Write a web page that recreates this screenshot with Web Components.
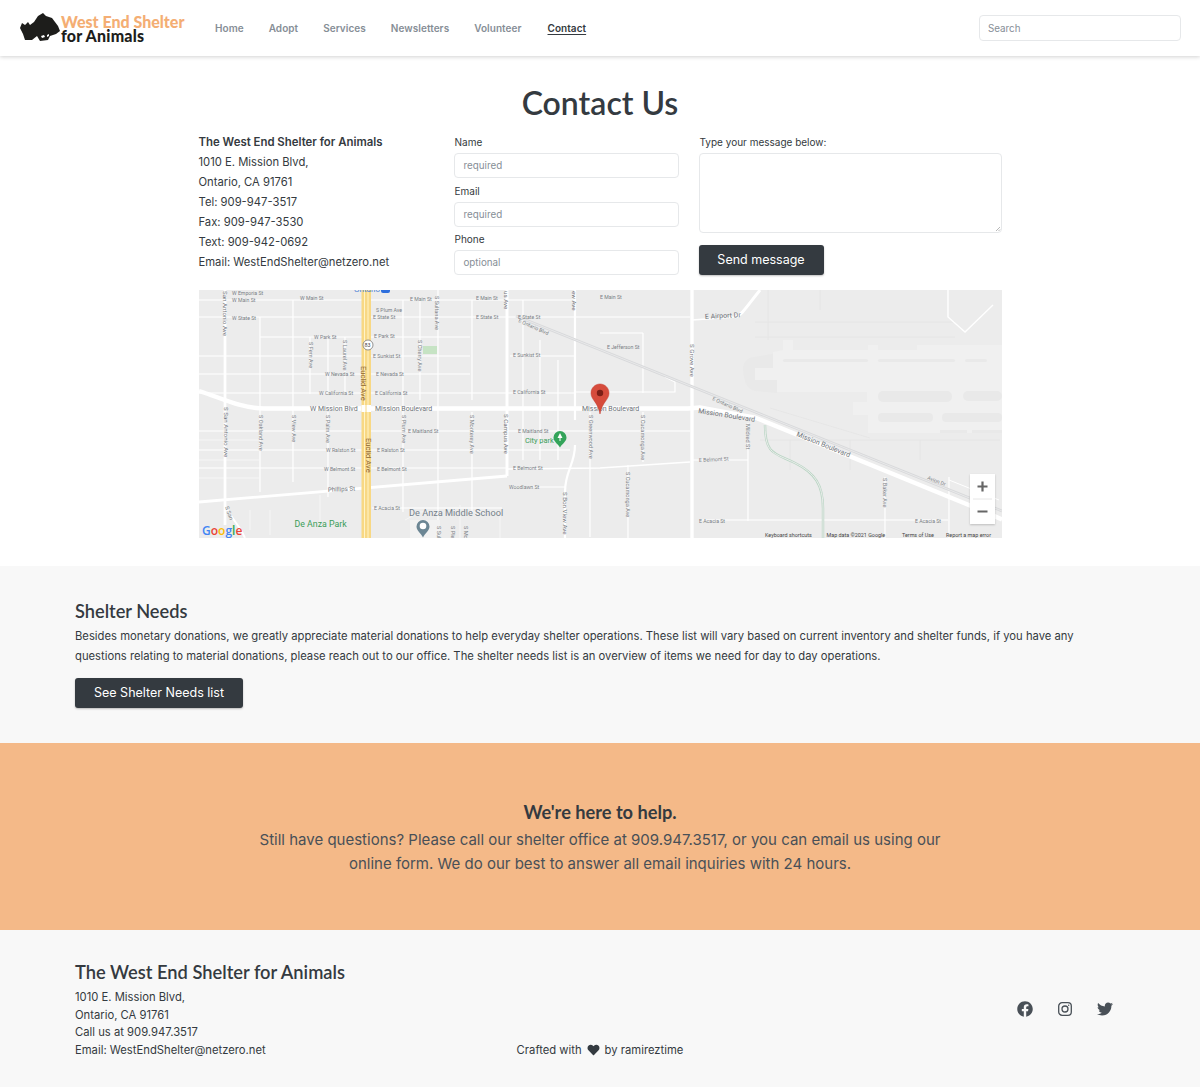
<!DOCTYPE html>
<html><head><meta charset="utf-8">
<style>
html,body{margin:0;padding:0;background:#fff}
body{font-family:Inter,"Liberation Sans",sans-serif;font-size:11.250px;line-height:20px;color:#343a40}
</style></head>
<body>
<site-nav></site-nav>
<contact-main></contact-main>
<needs-section></needs-section>
<help-band></help-band>
<site-footer></site-footer>
<script>
function el(name,html){customElements.define(name,class extends HTMLElement{constructor(){super();this.attachShadow({mode:'open'}).innerHTML=html;}});}
const HEAD='Lato,"Open Sans",sans-serif';

el('site-logo',`<style>
:host{display:flex;align-items:center;gap:1px;width:170px;height:32px}
svg{flex:none;display:block}
.t{font:900 16px/14px ${HEAD};margin-top:2px}
.a{color:#f4ae74}.b{color:#1d1d1b;letter-spacing:.2px}
</style>
<svg width="40" height="30" viewBox="20 13 40 30"><path fill="#1d1d1b" d="M43 13l3 3 6 2 3 4 3 4 2 5-4 3-6 2-2 4-8 1-3-5-5 4-7 0-2-6-3-6 2-5 3 2 3-3 2 3 4-3 4-6z"/><path fill="#fff" d="M41 36l3-1 1 2-3 1zM47 35l2-1 0 2-2 1z"/></svg>
<div class="t"><div class="a">West End Shelter</div><div class="b">for Animals</div></div>`);

el('site-nav',`<style>
:host{display:flex;align-items:center;height:56px;padding:0 19px 0 20px;box-sizing:border-box;background:#fff;box-shadow:0 1px 4px rgba(0,0,0,.18);position:relative;font:600 10px/14px Inter,sans-serif;color:#868e96}
nav{display:flex;gap:25px;margin-left:25px}
a{color:inherit;text-decoration:none;letter-spacing:.05px}
a.on{color:#343a40;text-decoration:underline;text-underline-offset:2px;margin-left:1px}
input{margin-left:auto;width:202px;height:26px;box-sizing:border-box;border:1px solid #e6e8ea;border-radius:4px;padding:0 8px;font:400 9.800px Inter,sans-serif;outline:0}
input::placeholder{color:#868e96}
</style>
<site-logo></site-logo>
<nav><a>Home</a><a>Adopt</a><a>Services</a><a>Newsletters</a><a>Volunteer</a><a class="on">Contact</a></nav>
<input placeholder="Search">`);

el('form-field',`<style>
:host{display:block;font-size:10px;color:#343a40}
label{display:block;line-height:20px;height:20px;margin-bottom:1px;padding-left:1px}
.i{display:block;box-sizing:border-box;width:100%;height:25px;border:1px solid #e6e8ea;border-radius:4px;padding:0 9px;font:400 9.800px/24px Inter,sans-serif;color:#868e96}
</style><label><slot name="label"></slot></label><div class="i"><slot></slot></div>`);

el('map-view',`<style>
:host{display:block;width:803px;height:248px;background:#ececec;overflow:hidden;position:relative}
svg{display:block}
text{font-family:Roboto,Arial,sans-serif;font-size:5.200px;fill:#7a7f85}
.m{font-size:7px;fill:#6d7278}
.s{font-size:6.200px;fill:#6d7278}
.v{font-size:5.600px}
.y{font-size:7.600px;fill:#8a6330}
.g{fill:#3a9d59;font-size:8.800px}
.sc{font-size:9.200px;fill:#74808a}
.at{font-size:5.400px;fill:#444}
.r{stroke:#fff;stroke-width:1.200;fill:none}
.w{stroke:#fff;fill:none}
</style>
<svg width="803" height="248" viewBox="199 290 803 248">
<!-- airport -->
<path fill="#e9e9e9" d="M755 357c-8 0-12 6-12 12s2 20 12 22l22 2v-40z"/>
<path fill="#f0f0f0" d="M755 368h18v-16l10-2v-10h10v10h75v-5h10v5h39v-5h85v88H868v-18h-15v-13h14v-10H777v-12h-22z"/>
<g fill="#e9e9e9"><rect x="783" y="359" width="85" height="3" rx="1.500"/><rect x="878" y="359" width="77" height="3" rx="1.500"/><rect x="965" y="359" width="22" height="3" rx="1.500"/><rect x="878" y="391" width="74" height="11" rx="5"/><rect x="963" y="391" width="39" height="10" rx="5"/><rect x="878" y="413" width="55" height="9" rx="4"/><rect x="942" y="413" width="60" height="9" rx="4"/><rect x="940" y="430" width="27" height="3"/><rect x="972" y="430" width="30" height="3"/></g>
<g stroke="#e5e5e5" fill="none" stroke-width=".8"><path d="M755 337h200M755 322h200M768 290v50M820 290v20M760 440h240M790 440v30M850 440v30M920 440v20M770 408l100 30"/></g>
<!-- minor grid -->
<g class="r">
<path d="M199 300h376M199 317h376M260 337h210M199 356h271M510 356h65M199 374h271M199 393h376M199 431h491M199 450h371M199 468h308M510 487h55M372 508h130M575 317h115M600 333h43M575 392h100l0-10-10-5M693 460h55M700 520h248"/>
<path d="M260 317v100M293 300v170M310 337v57M328 337v57M345 337v57M403 300v120M420 300v100M438 290v248M472 300v100M523 300v160M540 340v120M558 360v100M590 412v125M403 412v100M328 412v85M293 412v70M260 412v80M472 412v100M643 333v60M643 412v50M628 465v73M748 423v98M885 477v61M949 477v61"/>
</g>
<g stroke="#f6f6f6" stroke-width="1" fill="none"><path d="M199 440h60M199 460h60M199 478h60M405 520l15-8 18-1v27M460 505v33M470 512h30v26M250 510v20M270 510v25M320 495v30"/></g>
<!-- major roads -->
<g class="w">
<path d="M199 391c20 6 40 17 65 17.500H688l12-1 55 10 215 88 32 14" stroke-width="4.400"/>
<path d="M507 290v186" stroke-width="3"/>
<path d="M692 290v248" stroke-width="3.400"/>
<path d="M225 290v235" stroke-width="2.800"/>
<path d="M199 502l308-26" stroke-width="2.800"/>
<path d="M507 469l93-1 90-6" stroke-width="1.600"/>
<path d="M575 290v130M575 445c0 20-10 25-10 47v46" stroke-width="2.200"/>
<path d="M692 320l43-3" stroke-width="1.400"/>
<path d="M735 317c6-1 10-8 25-27" stroke-width="3"/>
<path d="M948 290v27l17 15 28-27" stroke-width="1.400"/>
<path d="M227 510l14 20 4 8" stroke-width="2"/>
<path d="M949 480l50 20" stroke-width="1"/>
</g>
<!-- rail -->
<path d="M516 316L1002 511" stroke="#d8d9db" stroke-width="2.600" fill="none"/>
<path d="M516 316L1002 511" stroke="#f4f4f4" stroke-width=".6" fill="none"/>
<!-- euclid -->
<rect x="361.500" y="290" width="9.500" height="248" fill="#f8d884"/>
<path d="M364.500 290v248M368 290v248" stroke="#fff3c8" stroke-width="1"/>
<rect x="361.500" y="405" width="9.500" height="7" fill="#fff"/><path d="M366 405v7" stroke="#f8d884"/>
<!-- creek -->
<path d="M765 425c0 30 10 28 30 38s28 22 28 45v30" stroke="#b9d6c4" stroke-width="2.400" fill="none"/><path d="M765 425c0 30 10 28 30 38s28 22 28 45v30" stroke="#ececec" stroke-width="1" fill="none"/>
<rect x="423" y="346" width="14" height="8" fill="#c6e3c4"/>
<rect x="410" y="520" width="30" height="18" fill="#f2f2f2"/>
<!-- labels -->
<text x="232" y="295">W Emporia St</text><text x="232" y="302">W Main St</text><text x="300" y="300">W Main St</text><text x="410" y="301">E Main St</text><text x="476" y="300">E Main St</text><text x="600" y="299">E Main St</text>
<text x="232" y="320">W State St</text><text x="373" y="319">E State St</text><text x="476" y="319">E State St</text><text x="518" y="319">E State St</text>
<text x="376" y="312">S Plum Ave</text><text x="314" y="339">W Park St</text><text x="374" y="338">E Park St</text>
<text x="373" y="358">E Sunkist St</text><text x="513" y="357">E Sunkist St</text><text x="325" y="376">W Nevada St</text><text x="376" y="376">E Nevada St</text>
<text x="319" y="395">W California St</text><text x="375" y="395">E California St</text><text x="513" y="394">E California St</text><text x="607" y="349">E Jefferson St</text>
<text class="m" x="310" y="411">W Mission Blvd</text><text class="m" x="375" y="411">Mission Boulevard</text><text class="m" x="582" y="411">Mission Boulevard</text>
<text x="408" y="433">E Maitland St</text><text x="518" y="433">E Maitland St</text><text x="326" y="452">W Ralston St</text><text x="377" y="452">E Ralston St</text>
<text x="324" y="471">W Belmont St</text><text x="377" y="471">E Belmont St</text><text x="513" y="470">E Belmont St</text><text x="509" y="489">Woodlawn St</text>
<text x="374" y="510">E Acacia St</text><text x="699" y="523">E Acacia St</text><text x="915" y="523">E Acacia St</text><text x="699" y="462" transform="rotate(-3 699 462)">E Belmont St</text>
<text class="s" x="328" y="492" transform="rotate(-3 328 492)">Phillips St</text>
<text class="m" x="705" y="319" transform="rotate(-3 705 319)">E Airport Dr</text>
<text class="m" x="698" y="413" transform="rotate(9 698 413)">Mission Boulevard</text><text class="m" x="796" y="436" transform="rotate(22 796 436)">Mission Boulevard</text>
<text x="712" y="400" transform="rotate(24 712 400)">E Ontario Blvd</text><text x="518" y="322" transform="rotate(24 518 322)">E Ontario Blvd</text><text x="927" y="479" transform="rotate(22 927 479)">Avion Dr</text>
<g text-anchor="start">
<text class="s" transform="translate(223 291) rotate(90)">San Antonio Ave</text>
<text class="s" transform="translate(224 407) rotate(90)">S San Antonio Ave</text>
<text class="v" transform="translate(259 415) rotate(90)">S Oakland Ave</text>
<text class="v" transform="translate(292 415) rotate(90)">S View Ave</text>
<text class="v" transform="translate(326 415) rotate(90)">S Palm Ave</text>
<text class="v" transform="translate(309 342) rotate(90)">S Fern Ave</text>
<text class="v" transform="translate(343 340) rotate(90)">S Laurel Ave</text>
<text class="v" transform="translate(418 340) rotate(90)">S Cherry Ave</text>
<text class="v" transform="translate(435 296) rotate(90)">S Sultana Ave</text>
<text class="v" transform="translate(402 415) rotate(90)">S Plum Ave</text>
<text class="v" transform="translate(470 415) rotate(90)">S Monterey Ave</text>
<text class="s" transform="translate(504 414) rotate(90)">S Campus Ave</text>
<text class="s" transform="translate(504 291) rotate(90)">us Ave</text>
<text class="s" transform="translate(572 291) rotate(90)">ew Ave</text>
<text class="v" transform="translate(589 415) rotate(90)">S Greenwood Ave</text>
<text class="v" transform="translate(641 415) rotate(90)">S Cucamonga Ave</text>
<text class="v" transform="translate(626 472) rotate(90)">S Cucamonga Ave</text>
<text class="s" transform="translate(690 344) rotate(90)">S Grove Ave</text>
<text class="v" transform="translate(746 424) rotate(90)">Mildred St</text>
<text class="v" transform="translate(883 478) rotate(90)">S Baker Ave</text>
<text class="s" transform="translate(563 492) rotate(90)">S Bon View Ave</text>
<text class="y" transform="translate(361 366) rotate(90)">Euclid Ave</text>
<text class="y" transform="translate(366 438) rotate(90)">Euclid Ave</text>
<text class="v" transform="translate(225 507) rotate(70)">S San</text>
<text class="v" transform="translate(437 526) rotate(90)">S Sult</text>
<text class="v" transform="translate(451 526) rotate(90)">S Ple</text>
<text class="v" transform="translate(464 526) rotate(90)">S Mo</text>
</g>
<circle cx="368" cy="345" r="5" fill="#fff" stroke="#777" stroke-width=".8"/><text x="364.600" y="347" style="font-size:5.400px;fill:#444">83</text>
<text x="354" y="292" style="font-size:8px;fill:#4a7fd6">Ontario</text><rect x="381" y="286" width="9" height="7" rx="2" fill="#2f6fdd"/>
<text class="g" x="294.500" y="527">De Anza Park</text><text class="g" style="font-size:7.400px" x="525" y="443">City park</text>
<path d="M560 431a6.500 6.500 0 0 1 6.500 6.500c0 4-4 6-6.500 10-2.500-4-6.500-6-6.500-10a6.500 6.500 0 0 1 6.500-6.500z" fill="#34a45a"/><path d="M560 433l2.500 5h-5z M559.500 438h1v3h-1z" fill="#fff"/>
<text class="sc" x="409" y="516">De Anza Middle School</text>
<path d="M423 520a6.500 6.500 0 0 1 6.500 6.500c0 4-4 6-6.500 11-2.500-5-6.500-7-6.500-11a6.500 6.500 0 0 1 6.500-6.500z" fill="#6c8694"/><circle cx="423" cy="526" r="3.300" fill="#fff"/>
<path d="M600 384c-5 0-9 4-9 9 0 7 7 9 9 21 2-12 9-14 9-21 0-5-4-9-9-9z" fill="#d64c3c" stroke="#c23a2c" stroke-width=".5"/><circle cx="600" cy="393" r="3.200" fill="#7c1f16"/>
<text x="202" y="535" style="font:600 12px 'Open Sans',sans-serif"><tspan style="fill:#4285f4">G</tspan><tspan style="fill:#ea4335">o</tspan><tspan style="fill:#fbbc05">o</tspan><tspan style="fill:#4285f4">g</tspan><tspan style="fill:#34a853">l</tspan><tspan style="fill:#ea4335">e</tspan></text>
<text class="at" x="765" y="537">Keyboard shortcuts</text><text class="at" x="826.500" y="537">Map data ©2021 Google</text><text class="at" x="902" y="537">Terms of Use</text><text class="at" x="946" y="537">Report a map error</text>
</svg>
<map-zoom></map-zoom>`);

el('map-zoom',`<style>
:host{position:absolute;left:771px;top:184px;width:25px;height:50px;background:#fff;display:block;box-shadow:0 1px 2px rgba(0,0,0,.2)}
svg{display:block}
</style><svg width="25" height="50"><path d="M12.500 7.500v10M7.500 12.500h10M7.500 37.500h10" stroke="#666" stroke-width="2.200"/><path d="M3 25h19" stroke="#e6e6e6"/></svg>`);

el('app-button',`<style>
:host{display:inline-flex;align-items:center;justify-content:center;height:30px;box-sizing:border-box;background:#343a40;color:#fff;border-radius:3px;font:400 12.500px/20px Inter,sans-serif;box-shadow:0 1px 2px rgba(0,0,0,.25)}
</style><slot></slot>`);

el('contact-main',`<style>
:host{display:block;width:803px;margin:0 auto;height:510px;box-sizing:border-box;padding-top:28px}
h1{margin:0 0 12px;text-align:center;font:600 32px/38px ${HEAD};color:#343a40;height:38px}
.row{display:flex;height:156px}
.info{width:255px;line-height:20px;flex:none;margin-top:-2px}
.info b{font-weight:600;display:block;font-size:11.400px}
.form{width:225px;flex:none;display:flex;flex-direction:column;gap:2.500px;margin-top:-2px}
.msg{width:303px;flex:none;margin-left:20px;margin-top:-2px;font-size:10px}
.msg label{display:block;height:20px;line-height:20px;margin-bottom:1px;padding-left:1px}
.ta{height:80px;box-sizing:border-box;border:1px solid #e6e8ea;border-radius:4px;position:relative;margin-bottom:12px}
.ta svg{position:absolute;right:0;bottom:0}
app-button{width:125px}
</style>
<h1>Contact Us</h1>
<div class="row">
<div class="info"><b>The West End Shelter for Animals</b>1010 E. Mission Blvd,<br>Ontario, CA 91761<br>Tel: 909-947-3517<br>Fax: 909-947-3530<br>Text: 909-942-0692<br>Email: WestEndShelter@netzero.net</div>
<div class="form"><form-field><span slot="label">Name</span>required</form-field><form-field><span slot="label">Email</span>required</form-field><form-field><span slot="label">Phone</span>optional</form-field></div>
<div class="msg"><label>Type your message below:</label><div class="ta"><svg width="6" height="6"><path d="M1 5l4-4M3.500 5l1.500-1.500" stroke="#999" stroke-width=".7"/></svg></div><app-button>Send message</app-button></div>
</div>
<map-view></map-view>`);

el('needs-section',`<style>
:host{display:block;height:177px;box-sizing:border-box;background:#f8f8f8;padding:34px 75px 0}
h2{margin:0 0 4px;font:600 18.200px/22px ${HEAD};color:#343a40}
p{margin:0 0 12px;line-height:20px;font-size:11.250px;max-width:1010px}
app-button{width:168px}
</style>
<h2>Shelter Needs</h2>
<p>Besides monetary donations, we greatly appreciate material donations to help everyday shelter operations. These list will vary based on current inventory and shelter funds, if you have any questions relating to material donations, please reach out to our office. The shelter needs list is an overview of items we need for day to day operations.</p>
<app-button>See Shelter Needs list</app-button>`);

el('help-band',`<style>
:host{display:block;height:187px;box-sizing:border-box;background:#f4b988;padding-top:58px;text-align:center}
h2{margin:0 0 5px;font:700 18.200px/22px ${HEAD};color:#343a40}
p{margin:0 auto;width:700px;font-size:15px;line-height:24px;color:#495057}
</style><h2>We're here to help.</h2><p>Still have questions? Please call our shelter office at 909.947.3517, or you can email us using our online form. We do our best to answer all email inquiries with 24 hours.</p>`);

el('site-footer',`<style>
:host{display:flex;height:157px;box-sizing:border-box;background:#f8f8f8;padding:31px 75px 0;position:relative;font-size:11.250px;line-height:17.500px}
.l{width:441px;flex:none}
h2{margin:0 0 6px;font:600 18.300px/22px ${HEAD};color:#343a40}
.c{align-self:flex-start;margin-top:81px;display:flex;align-items:center;gap:5px;width:168px;justify-content:center;white-space:nowrap}
.c svg{margin-top:-2px}
.s{margin-left:auto;display:flex;gap:24px;margin-top:40px;margin-right:12px;height:16px}
svg{display:block}
</style>
<div class="l"><h2>The West End Shelter for Animals</h2>1010 E. Mission Blvd,<br>Ontario, CA 91761<br>Call us at 909.947.3517<br>Email: WestEndShelter@netzero.net</div>
<div class="c">Crafted with <svg width="13" height="12" viewBox="0 0 512 512"><path fill="#343a40" d="M462.300 62.600C407.500 15.900 326 24.300 275.700 76.200L256 96.500l-19.700-20.300C186.100 24.300 104.500 15.900 49.700 62.600c-62.800 53.600-66.100 149.800-9.900 207.900l193.500 199.800c12.500 12.900 32.800 12.900 45.300 0l193.500-199.800c56.300-58.100 53-154.300-9.800-207.900z"/></svg> by ramireztime</div>
<div class="s">
<svg width="16" height="16" viewBox="0 0 512 512"><path fill="#495057" d="M504 256C504 119 393 8 256 8S8 119 8 256c0 123.780 90.690 226.380 209.250 245V327.690h-63V256h63v-54.640c0-62.150 37-96.480 93.670-96.480 27.140 0 55.520 4.840 55.520 4.840v61h-31.280c-30.800 0-40.410 19.120-40.410 38.730V256h68.780l-11 71.690h-57.780V501C413.310 482.380 504 379.780 504 256z"/></svg>
<svg width="16" height="16" viewBox="0 0 16 16" fill="none" stroke="#495057" stroke-width="1.300"><rect x="1.700" y="1.700" width="12.600" height="12.600" rx="3.400"/><circle cx="8" cy="8" r="3"/><circle cx="11.700" cy="4.300" r=".7" fill="#495057" stroke="none"/></svg>
<svg width="16" height="16" viewBox="0 0 512 512"><path fill="#495057" d="M459.370 151.716c.325 4.548.325 9.097.325 13.645 0 138.720-105.583 298.558-298.558 298.558-59.452 0-114.680-17.219-161.137-47.106 8.447.974 16.568 1.299 25.340 1.299 49.055 0 94.213-16.568 130.274-44.832-46.132-.975-84.792-31.188-98.112-72.772 6.498.974 12.995 1.624 19.818 1.624 9.421 0 18.843-1.300 27.614-3.573-48.081-9.747-84.143-51.980-84.143-102.985v-1.299c13.969 7.797 30.214 12.670 47.431 13.319-28.264-18.843-46.781-51.005-46.781-87.391 0-19.492 5.197-37.360 14.294-52.954 51.655 63.675 129.300 105.258 216.365 109.807-1.624-7.797-2.599-15.918-2.599-24.040 0-57.828 46.782-104.934 104.934-104.934 30.213 0 57.502 12.670 76.670 33.137 23.715-4.548 46.456-13.320 66.599-25.340-7.798 24.366-24.366 44.833-46.132 57.827 21.117-2.273 41.584-8.122 60.426-16.243-14.292 20.791-32.161 39.308-52.628 54.253z"/></svg>
</div>`);
</script>
</body></html>
